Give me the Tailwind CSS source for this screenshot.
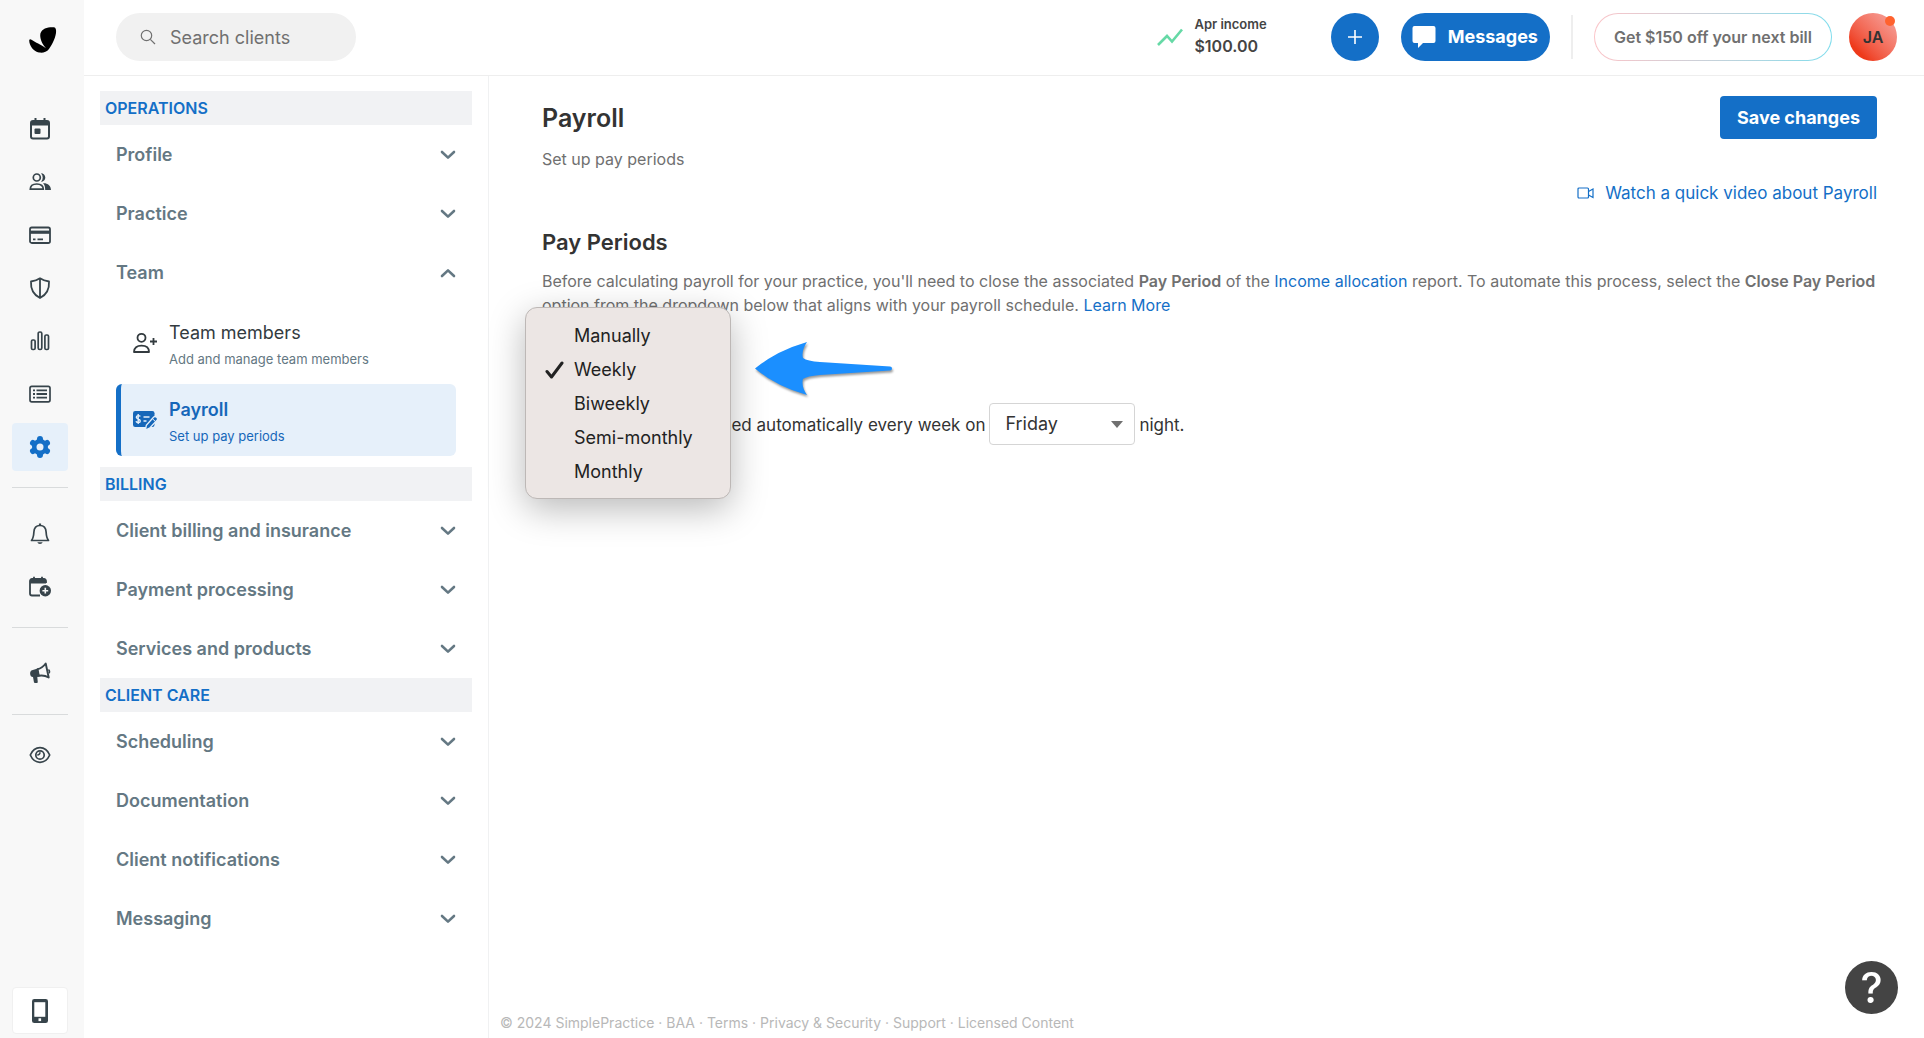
<!DOCTYPE html>
<html lang="en">
<head>
<meta charset="utf-8">
<meta name="viewport" content="width=device-width, initial-scale=1">
<title>Payroll settings</title>
<script src="https://cdn.jsdelivr.net/npm/@tailwindcss/browser@4"></script>
</head>
<body class="flex min-h-screen bg-white font-['Inter',sans-serif] text-[#333]">

<svg class="hidden">
  <symbol id="chev" viewBox="0 0 16 10"><path d="M2 2l6 5.6L14 2" fill="none" stroke="#647883" stroke-width="2.6" stroke-linecap="round" stroke-linejoin="round"/></symbol>
</svg>

<!-- Icon rail -->
<nav aria-label="Main" class="flex w-[84px] shrink-0 flex-col bg-[#f8f8f8] px-3 pb-1 text-[#37444b]">
  <a href="#" aria-label="Home" class="mt-6 ml-4 block size-8">
    <svg viewBox="28 24 32 32" class="size-8"><path d="M46 48.2C42 44 39.500 38 40.400 33.500C42 28 49 26.800 54 27.300Q56.600 28 56 33C55 40 51 46 49 49C46.500 52.500 42.500 53 39 52.500C34 51.500 29 46 29.200 40Q30 38.800 31.500 39.800C36 43 40 44 46 48.200Z" fill="#000"/></svg>
  </a>
  <div class="mt-[49px] flex flex-col gap-[5px]">
    <a href="#" aria-label="Calendar" class="flex h-12 w-14 items-center justify-center rounded">
      <svg viewBox="0 0 24 24" class="size-6" fill="none" stroke="currentColor" stroke-width="2"><rect x="3" y="4" width="18" height="17.500" rx="2"/><path d="M3 4h18v4.500H3z" fill="currentColor" stroke="none"/><path d="M7.500 1v4M16.500 1v4"/><rect x="6.500" y="11.500" width="6" height="5.500" rx="1" fill="currentColor" stroke="none"/></svg>
    </a>
    <a href="#" aria-label="Clients" class="flex h-12 w-14 items-center justify-center rounded">
      <svg viewBox="0 0 24 24" class="size-6" fill="none" stroke="currentColor" stroke-width="1.700"><circle cx="8.800" cy="7.500" r="3.500"/><path d="M2.300 19.200c0-3.600 2.700-5.200 6.500-5.200s6.500 1.600 6.500 5.200z"/><path d="M13 3.200a4.300 4.300 0 1 1 0 8.600a6.200 6.200 0 0 0 0-8.600zM15 13.200c4.500-.3 7.800 2 8 6.800h-5.800c0-3.200-.5-5-2.200-6.800z" fill="currentColor" stroke="none"/></svg>
    </a>
    <a href="#" aria-label="Billing" class="flex h-12 w-14 items-center justify-center rounded">
      <svg viewBox="0 0 24 24" class="size-6" fill="none" stroke="currentColor" stroke-width="1.800"><rect x="2" y="4.500" width="20" height="15.500" rx="1.800"/><path d="M2 9.200h20" stroke-width="3.200"/><path d="M5 16.300h2.500M9.500 16.300h5.500"/></svg>
    </a>
    <a href="#" aria-label="Insurance" class="flex h-12 w-14 items-center justify-center rounded">
      <svg viewBox="0 0 24 24" class="size-6" fill="none" stroke="currentColor" stroke-width="1.800" stroke-linejoin="round"><path d="M12 2.300c2.500 1.700 5.500 2.700 9 3.200.5 8-3 13.500-9 16.500C6 19 2.500 13.500 3 5.500c3.500-.5 6.500-1.500 9-3.200zM12 2.300V22"/></svg>
    </a>
    <a href="#" aria-label="Analytics" class="flex h-12 w-14 items-center justify-center rounded">
      <svg viewBox="0 0 24 24" class="size-6" fill="none" stroke="currentColor" stroke-width="1.700"><rect x="3.500" y="11" width="3.600" height="9.500" rx="1.300"/><rect x="10.200" y="3" width="3.600" height="17.500" rx="1.600"/><rect x="16.900" y="6" width="3.600" height="14.500" rx="1.300"/></svg>
    </a>
    <a href="#" aria-label="Activity" class="flex h-12 w-14 items-center justify-center rounded">
      <svg viewBox="0 0 24 24" class="size-6" fill="none" stroke="currentColor" stroke-width="1.700"><rect x="2" y="4.300" width="20" height="15.500" rx="1.800"/><path d="M5 8.300h2M5 12h2M5 15.700h2M8.500 8.300H19M8.500 12H19M8.500 15.700H19" stroke-width="1.800"/></svg>
    </a>
    <a href="#" aria-label="Settings" aria-current="page" class="flex h-12 w-14 items-center justify-center rounded bg-[#e6f0fa] text-[#146fc7]">
      <svg viewBox="0 0 24 24" class="size-6" fill="none" stroke="currentColor"><path d="M12 4v16M5 8l14 8M19 8L5 16" stroke-width="6" stroke-linecap="round"/><circle cx="12" cy="12" r="8" fill="currentColor" stroke="none"/><circle cx="12" cy="12" r="3.500" fill="#e6f0fa" stroke="none"/></svg>
    </a>
  </div>
  <hr class="mt-4 w-14 border-[#d9dbdc]">
  <div class="mt-[22px] flex flex-col gap-[5px]">
    <a href="#" aria-label="Notifications" class="flex h-12 w-14 items-center justify-center">
      <svg viewBox="0 0 24 24" class="size-6" fill="none" stroke="currentColor" stroke-width="1.700" stroke-linejoin="round"><path d="M3.500 18.500C5.500 16 5.700 13.500 5.900 10c.2-4 2.600-6.500 6.100-6.500s5.900 2.500 6.100 6.500c.2 3.500.4 6 2.400 8.500z"/><path d="M12 1.500v2" stroke-width="2.200"/><path d="M9.300 20.300h5.400a2.800 2.300 0 0 1-5.400 0z" fill="currentColor" stroke="none"/></svg>
    </a>
    <a href="#" aria-label="Appointment requests" class="flex h-12 w-14 items-center justify-center">
      <svg viewBox="0 0 24 24" class="size-6" fill="none" stroke="currentColor" stroke-width="1.800"><path d="M18 8V6a2 2 0 0 0-2-2H4a2 2 0 0 0-2 2v12.500a2 2 0 0 0 2 2h8"/><path d="M2 4h16v4.500H2z" fill="currentColor" stroke="none"/><path d="M6 1.800v4M14 1.800v4"/><circle cx="17.300" cy="15.700" r="5.700" fill="currentColor" stroke="none"/><path d="M17.300 12.800v5.800M14.400 15.700h5.800" stroke="#f8f8f8" stroke-width="1.600"/></svg>
    </a>
  </div>
  <hr class="mt-4 w-14 border-[#d9dbdc]">
  <a href="#" aria-label="Announcements" class="mt-[21px] flex h-12 w-14 items-center justify-center">
    <svg viewBox="0 0 24 24" class="size-6" fill="none" stroke="currentColor" stroke-width="1.900" stroke-linejoin="round"><path d="M9.500 8.300C13 7.500 15.500 5.500 17.700 2.500L20.700 16.500C17.500 14.500 14.500 14 10.800 14.700z"/><path d="M9.800 7.500L4 9.200c-3 1-2.200 7 1 6.800l1 5.500c1.200.8 2.700.6 3.800 0L9.300 16l2.200-.6z" fill="currentColor" stroke="none"/><path d="M20.300 8.800c1.400.5 1.600 2.500.5 3.300" stroke-width="1.600"/></svg>
  </a>
  <hr class="mt-[17px] w-14 border-[#d9dbdc]">
  <a href="#" aria-label="Preview" class="mt-4 flex h-12 w-14 items-center justify-center">
    <svg viewBox="0 0 24 24" class="size-6" fill="none" stroke="currentColor" stroke-width="1.700"><path d="M2.300 12C4.500 7 8 4.700 12 4.700S19.500 7 21.700 12c-2.200 5-5.700 7.300-9.700 7.300S4.500 17 2.300 12z"/><circle cx="12" cy="12" r="4.200"/><path d="M12 9.300a2.700 2.700 0 0 1-2.700 2.700" stroke-width="1.500"/></svg>
  </a>
  <a href="#" aria-label="Mobile app" class="mt-auto flex h-[47px] w-14 items-center justify-center rounded border border-[#f0f0f0] bg-white">
    <svg viewBox="0 0 24 24" class="size-6"><rect x="4" y="0" width="16" height="24" rx="2.300" fill="currentColor"/><rect x="6.300" y="3.200" width="11" height="14.600" fill="#fff"/><rect x="10.500" y="19.300" width="2.600" height="2.800" fill="#fff"/></svg>
  </a>
</nav>

<div class="flex min-w-0 flex-1 flex-col">
  <!-- Top bar -->
  <header class="flex h-[76px] items-center border-b border-[#eee] pr-[27px] pb-px pl-8">
    <div class="flex h-12 w-60 items-center gap-3 rounded-full bg-[#f1f1f1] pl-6">
      <svg viewBox="0 0 16 16" class="size-4 shrink-0" fill="none" stroke="#707070" stroke-width="1.200"><circle cx="6.500" cy="6.500" r="5.200"/><path d="M10.300 10.300L15 15"/></svg>
      <input type="search" aria-label="Search clients" placeholder="Search clients" class="h-8 w-40 bg-transparent pl-[2px] text-lg outline-none placeholder:text-[#707070]">
    </div>
    <a href="#" class="ml-auto flex items-center gap-[11px]">
      <svg viewBox="0 0 26 18" class="h-[18px] w-[26px]" fill="none" stroke="#66d9a6" stroke-width="2.600"><path d="M1 17L10 8L15 13.500L25 1.500"/></svg>
      <span class="flex flex-col pb-[2px] font-semibold text-[#444]"><span class="text-[13px] leading-5">Apr income</span><span class="text-base leading-6">$100.00</span></span>
    </a>
    <button aria-label="Create" class="ml-16 flex size-12 items-center justify-center rounded-full bg-[#146fc7]">
      <svg viewBox="0 0 14 14" class="size-[14px]" stroke="#fff" stroke-width="1.600"><path d="M7 0v14M0 7h14"/></svg>
    </button>
    <button class="ml-[22px] flex h-12 items-center gap-3 rounded-full bg-[#146fc7] pr-[12px] pl-[11px] text-lg font-bold text-white">
      <svg viewBox="0 0 24 24" class="size-6"><path d="M2.500 1h19Q23.500 1 23.500 3v13q0 2-2 2H11l-5 5v-5H2.500q-2 0-2-2V3q0-2 2-2z" fill="#fff"/></svg>Messages
    </button>
    <div class="mx-[21px] h-11 w-[2px] bg-[#eee]"></div>
    <a href="#" class="flex h-12 rounded-full bg-linear-to-r from-[#fbc4c8] to-[#7ddcec] p-px">
      <span class="flex items-center rounded-full bg-white px-[19px] text-base font-semibold text-[#707070]">Get $150 off your next bill</span>
    </a>
    <button aria-label="Account menu" class="relative ml-[17px] flex size-12 items-center justify-center rounded-full bg-linear-to-tr from-[#ee3a1a] from-20% to-[#f59187] to-80% text-base font-semibold text-[#333]">JA<span class="absolute top-[3px] right-[2px] size-[10px] rounded-full bg-[#ff622e]"></span></button>
  </header>

  <div class="flex flex-1">
    <!-- Settings menu -->
    <aside class="w-[405px] shrink-0 border-r border-[#f0f1f2] px-4 pt-[15px]">
      <h2 class="bg-[#f1f2f4] px-[5px] text-base leading-[34px] font-semibold text-[#146fc7]">OPERATIONS</h2>
      <div class="px-4 text-lg font-semibold text-[#647883]">
        <button class="flex h-[59px] w-full items-center justify-between">Profile<svg class="h-[10px] w-4"><use href="#chev"/></svg></button>
        <button class="flex h-[59px] w-full items-center justify-between">Practice<svg class="h-[10px] w-4"><use href="#chev"/></svg></button>
        <button aria-expanded="true" class="flex h-[59px] w-full items-center justify-between">Team<svg class="h-[10px] w-4 rotate-180"><use href="#chev"/></svg></button>
      </div>
      <div class="flex flex-col gap-[5px] px-4 pt-[5px] pb-[11px]">
        <a href="#" class="flex h-[72px] items-center gap-3 rounded-md pl-[17px]">
          <svg viewBox="0 0 24 24" class="size-6 shrink-0" fill="none" stroke="#333b3f" stroke-width="1.800" stroke-linejoin="round"><circle cx="8.500" cy="6.800" r="4"/><path d="M1 21c0-4.500 3-6.300 7.500-6.300S16 16.500 16 21z"/><path d="M20.500 7v7M17 10.500h7"/></svg>
          <span class="flex flex-col pt-1"><span class="text-lg leading-7 text-[#333b3f]">Team members</span><span class="text-[13px] leading-6 text-[#647883]">Add and manage team members</span></span>
        </a>
        <a href="#" aria-current="page" class="flex h-[72px] items-center gap-3 rounded-md border-l-[5px] border-[#146fc7] bg-[#e6f0fa] pl-3 text-[#1667b9]">
          <svg viewBox="0 0 24 20" class="h-5 w-6 shrink-0"><rect x="0" y="1" width="21.500" height="16" rx="2.200" fill="currentColor"/><path d="M7.200 6.500C6.800 5.300 3.300 5.200 3.300 7.200S7.300 8.800 7.300 10.900S3.500 13 3 11.300M5.200 4v10M10.500 7h6M10.500 11h3" fill="none" stroke="#e6f0fa" stroke-width="1.400"/><path d="M12.500 20l.8-4.600L20.700 7q1.500-1.200 3 .3t.3 3L17 17.800z" fill="currentColor" stroke="#e6f0fa" stroke-width="1.300"/><path d="M19.500 8.800l3 2.800" stroke="#e6f0fa" stroke-width="1"/></svg>
          <span class="flex flex-col pt-1"><span class="text-lg leading-7 font-semibold">Payroll</span><span class="text-[13px] leading-6">Set up pay periods</span></span>
        </a>
      </div>
      <h2 class="bg-[#f1f2f4] px-[5px] text-base leading-[34px] font-semibold text-[#146fc7]">BILLING</h2>
      <div class="px-4 text-lg font-semibold text-[#647883]">
        <button class="flex h-[59px] w-full items-center justify-between">Client billing and insurance<svg class="h-[10px] w-4"><use href="#chev"/></svg></button>
        <button class="flex h-[59px] w-full items-center justify-between">Payment processing<svg class="h-[10px] w-4"><use href="#chev"/></svg></button>
        <button class="flex h-[59px] w-full items-center justify-between">Services and products<svg class="h-[10px] w-4"><use href="#chev"/></svg></button>
      </div>
      <h2 class="bg-[#f1f2f4] px-[5px] text-base leading-[34px] font-semibold text-[#146fc7]">CLIENT CARE</h2>
      <div class="px-4 text-lg font-semibold text-[#647883]">
        <button class="flex h-[59px] w-full items-center justify-between">Scheduling<svg class="h-[10px] w-4"><use href="#chev"/></svg></button>
        <button class="flex h-[59px] w-full items-center justify-between">Documentation<svg class="h-[10px] w-4"><use href="#chev"/></svg></button>
        <button class="flex h-[59px] w-full items-center justify-between">Client notifications<svg class="h-[10px] w-4"><use href="#chev"/></svg></button>
        <button class="flex h-[59px] w-full items-center justify-between">Messaging<svg class="h-[10px] w-4"><use href="#chev"/></svg></button>
      </div>
    </aside>

    <div class="flex min-w-0 flex-1 flex-col">
      <main class="pt-5 pr-[47px] pl-[53px]">
        <div class="flex items-center justify-between">
          <h1 class="text-[25px] leading-8 font-semibold">Payroll</h1>
          <button class="h-[43px] rounded bg-[#146fc7] px-[17px] text-lg font-bold text-white">Save changes</button>
        </div>
        <p class="mt-2 text-base leading-6 text-[#707070]">Set up pay periods</p>
        <a href="#" class="mt-[10px] flex items-center justify-end gap-[11px] text-[17px] leading-6 text-[#146fc7]">
          <svg viewBox="0 0 17 12" class="h-3 w-[17px]" fill="none" stroke="currentColor" stroke-width="1.200"><rect x="1" y="1" width="10.500" height="10" rx="1"/><path d="M11.500 4.500L16 2v8.500l-4.500-2.500"/></svg>Watch a quick video about Payroll
        </a>
        <h2 class="mt-5 text-[22px] leading-[34px] font-semibold">Pay Periods</h2>
        <p class="mt-[10px] -mr-4 text-base leading-6 text-[#707070]">Before calculating payroll for your practice, you'll need to close the associated <b class="font-semibold">Pay Period</b> of the <a href="#" class="text-[#146fc7]">Income allocation</a> report. To automate this process, select the <b class="font-semibold">Close Pay Period</b> option from the dropdown below that aligns with your payroll schedule. <a href="#" class="text-[#146fc7]">Learn More</a></p>

        <div class="relative mt-[31px] h-[42px] w-[146px]">
          <!-- Open pay period list -->
          <ul role="listbox" aria-label="Close Pay Period" class="absolute -top-[41px] -left-[17px] z-10 w-[206px] rounded-xl border border-[#bdb8b6] bg-[#ece6e4] pt-[11px] pb-[9px] text-lg leading-[34px] text-[#222] shadow-[0_10px_36px_rgba(0,0,0,0.28)]">
            <li role="option" class="pl-12">Manually</li>
            <li role="option" aria-selected="true" class="flex items-center gap-[10px] pl-[19px]"><svg viewBox="0 0 19 18" class="h-[18px] w-[19px]" fill="none" stroke="#222" stroke-width="3" stroke-linecap="round" stroke-linejoin="round"><path d="M2 10.500L6.500 16L17 2"/></svg>Weekly</li>
            <li role="option" class="pl-12">Biweekly</li>
            <li role="option" class="pl-12">Semi-monthly</li>
            <li role="option" class="pl-12">Monthly</li>
          </ul>
          <svg viewBox="0 0 140 56" class="absolute -top-[7px] left-[212px] h-14 w-[140px] drop-shadow-[1px_2px_1px_rgba(0,0,0,0.4)]"><path d="M1 27.500Q22 10 53 1Q47 10 49 17Q53 20 66 21L136 25.500Q138 25.500 138 27.500Q138 29.500 136 29.500L66 34Q53 35 49 38Q47 45 53 54Q22 45 1 27.500Z" fill="#1b8fff"/></svg>
        </div>

        <div class="mt-[13px] flex items-center gap-1 text-[17px]">
          <label for="day" class="pt-[3px] whitespace-nowrap">Pay Periods will be closed automatically every week on</label>
          <span class="relative flex items-center">
            <select id="day" class="h-[42px] w-[146px] appearance-none rounded border border-[#d5d5d5] bg-white px-[15px] text-lg text-[#333]"><option>Friday</option></select>
            <svg viewBox="0 0 12 7" class="pointer-events-none absolute right-3 h-[7px] w-3"><path d="M0 0h12L6 7z" fill="#707070"/></svg>
          </span>
          <span class="pt-[3px]">night.</span>
        </div>
      </main>

      <footer class="mt-auto pb-[5px] pl-[11px] text-sm leading-5 text-[#b8b8b8]">© 2024 SimplePractice · <a href="#">BAA</a> · <a href="#">Terms</a> · <a href="#">Privacy &amp; Security</a> · <a href="#">Support</a> · <a href="#">Licensed Content</a></footer>
    </div>
  </div>
</div>

<button aria-label="Help" class="fixed right-[26px] bottom-6 flex size-[53px] items-center justify-center rounded-full bg-[#444] text-[42px] leading-none font-medium text-white">?</button>
</body>
</html>
